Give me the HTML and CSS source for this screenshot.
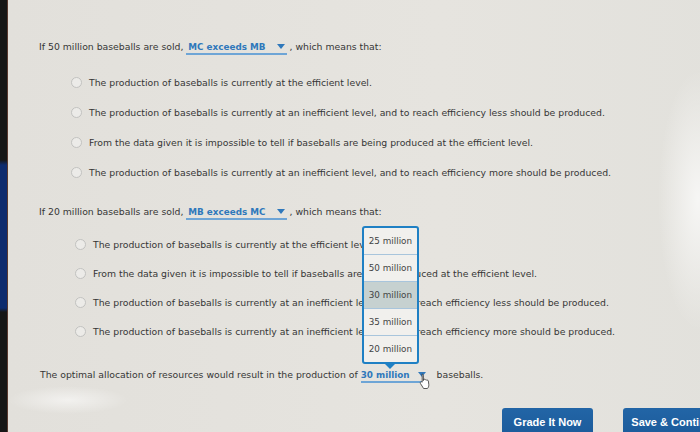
FILE: index.html
```html
<!DOCTYPE html>
<html lang="en">
<head>
<meta charset="utf-8">
<title>Baseballs</title>
<link rel="stylesheet" href="styles.css">
</head>
<body>
<div class="screen">
  <div class="bezel"></div>
  <main class="page">
    <p class="q q1">If 50 million baseballs are sold, <span class="sel">MC exceeds MB <span class="caret"></span></span> , which means that:</p>
    <ul class="opts g1">
      <li><span class="radio"></span>The production of baseballs is currently at the efficient level.</li>
      <li><span class="radio"></span>The production of baseballs is currently at an inefficient level, and to reach efficiency less should be produced.</li>
      <li><span class="radio"></span>From the data given it is impossible to tell if baseballs are being produced at the efficient level.</li>
      <li><span class="radio"></span>The production of baseballs is currently at an inefficient level, and to reach efficiency more should be produced.</li>
    </ul>
    <p class="q q2">If 20 million baseballs are sold, <span class="sel">MB exceeds MC <span class="caret"></span></span> , which means that:</p>
    <ul class="opts g2">
      <li><span class="radio"></span>The production of baseballs is currently at the efficient level.</li>
      <li><span class="radio"></span>From the data given it is impossible to tell if baseballs are being produced at the efficient level.</li>
      <li><span class="radio"></span>The production of baseballs is currently at an inefficient level, and to reach efficiency less should be produced.</li>
      <li><span class="radio"></span>The production of baseballs is currently at an inefficient level, and to reach efficiency more should be produced.</li>
    </ul>
    <p class="q q3">The optimal allocation of resources would result in the production of <span class="sel open">30 million<span class="caret"></span>
        <span class="menu">
          <span class="item">25 million</span>
          <span class="item">50 million</span>
          <span class="item hl">30 million</span>
          <span class="item">35 million</span>
          <span class="item">20 million</span>
        </span>
        <svg class="hand" width="12" height="16" viewBox="0 0 12 16"><path d="M3.2 1.2c.7 0 1.2.5 1.2 1.2v5.2l.3-1.3c.7-.3 1.3 0 1.5.6.6-.4 1.3-.2 1.6.4.7-.3 1.5 0 1.6.8l.4 3.6c.1 1.6-.4 2.8-1.4 3.8H4.6L1.5 10.6c-.5-.6-.3-1.4.3-1.7.5-.3 1.1-.1 1.4.3V2.4c0-.7-.7-1.2 0-1.2z" fill="#fff" stroke="#333" stroke-width=".8" stroke-linejoin="round"/></svg>
      </span><span class="after">baseballs.</span></p>
    <div class="actions">
      <button class="btn">Grade It Now</button>
      <button class="btn">Save &amp; Continue</button>
    </div>
  </main>
</div>
</body>
</html>
```
FILE: styles.css
```css
html, body {
  margin: 0;
  padding: 0;
  width: 700px;
  height: 432px;
  overflow: hidden;
}
.screen {
  display: flex;
  width: 700px;
  height: 432px;
}
.bezel {
  width: 7px;
  flex: none;
  background: linear-gradient(#161616 0, #161616 160px, #0d2b6e 165px, #0d2b6e 308px, #161616 312px);
  border-right: 1px solid #5a3a30;
}
.page {
  flex: 1;
  position: relative;
  padding: 40px 0 0 31px;
  font-family: "DejaVu Sans", Verdana, sans-serif;
  font-size: 9.3px;
  color: #363636;
  background:
    radial-gradient(ellipse 40px 130px at 690px 200px, rgba(255,255,255,.7), rgba(255,255,255,0)),
    radial-gradient(ellipse 60px 14px at 60px 400px, rgba(255,255,255,.55), rgba(255,255,255,0)),
    linear-gradient(90deg, #e2e0db, #e6e4df 60%, #e2e1dc);
}
.q {
  margin: 0;
  height: 14px;
  line-height: 14px;
  white-space: nowrap;
}
.sel {
  display: inline-block;
  line-height: 12px;
  font-size: 8.8px;
  font-weight: bold;
  color: #2f78bb;
  border-bottom: 2px solid #6ea5d6;
  padding: 0 2px 0 2px;
  position: relative;
}
.caret {
  display: inline-block;
  width: 0;
  height: 0;
  margin-left: 8px;
  border-left: 4.5px solid transparent;
  border-right: 4.5px solid transparent;
  border-top: 5px solid #2f78bb;
  vertical-align: 1px;
}
.opts {
  list-style: none;
  margin: 0;
  padding: 0;
}
.opts li {
  display: flex;
  align-items: center;
  white-space: nowrap;
}
.g1 { margin-top: 13px; padding-left: 32px; }
.g1 li { height: 30px; }
.g2 { margin-top: 11px; padding-left: 36px; }
.g2 li { height: 29px; }
.radio {
  width: 9px;
  height: 9px;
  border: 1px solid #c2c2c0;
  border-radius: 50%;
  background: #ecebe8;
  margin-right: 7px;
  flex: none;
}
.q2 { margin-top: 18px; }
.q3 { margin-top: 22px; padding-left: 1px; }
.sel.open { padding: 0; }
.sel.open .caret { margin-left: 8px; margin-right: -4px; }
.after { margin-left: 15px; }
.menu {
  position: absolute;
  left: 1px;
  bottom: calc(100% + 5px);
  width: 53px;
  display: flex;
  flex-direction: column;
  border: 2px solid #1f80c4;
  border-radius: 3px;
  background: #f1f0ed;
  font-weight: normal;
  color: #444;
  font-size: 8.8px;
}
.menu::after {
  content: "";
  position: absolute;
  left: 50%;
  bottom: -7px;
  margin-left: -5px;
  border-left: 5px solid transparent;
  border-right: 5px solid transparent;
  border-top: 5px solid #1f80c4;
}
.item {
  height: 26px;
  line-height: 26px;
  padding-left: 5px;
  border-bottom: 1px solid #a8c5dc;
}
.item:last-child { border-bottom: 0; }
.item.hl { background: #c6d1d0; }
.hand {
  position: absolute;
  right: -9px;
  top: 4px;
}
.actions {
  display: flex;
  gap: 30px;
  margin-top: 26px;
  padding-left: 463px;
}
.btn {
  flex: none;
  height: 30px;
  border: 0;
  border-radius: 3px 3px 0 0;
  background: linear-gradient(#2265a6, #1b5a9a);
  color: #fff;
  font-family: "Liberation Sans", Arial, sans-serif;
  font-weight: bold;
  font-size: 11px;
  padding: 0 0 2px 0;
  width: 91px;
  white-space: nowrap;
  text-align: center;
}
.btn + .btn { width: 104px; }
```
